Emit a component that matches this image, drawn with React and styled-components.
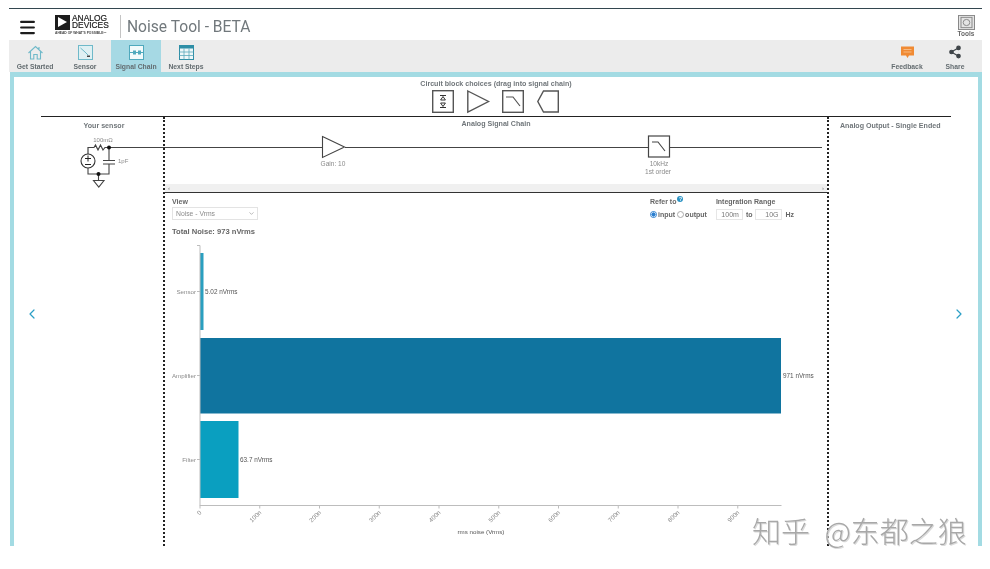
import React from "react";
import styled, { createGlobalStyle } from "styled-components";
import { Menu, ChevronLeft, ChevronRight, ChevronDown, Share2 } from "lucide-react";

const Global = createGlobalStyle`
  html, body { margin: 0; padding: 0; background: #fff; }
  body { font-family: "Liberation Sans", Arial, sans-serif; }
`;

const Page = styled.div`
  position: relative;
  width: 990px;
  height: 569px;
  box-sizing: border-box;
  padding: 8px 8px 23px 9px;
  display: flex;
  flex-direction: column;
  overflow: hidden;
  filter: blur(0.3px);
`;

const Header = styled.header`
  height: 31px;
  flex: none;
  border-top: 1px solid #33464f;
  display: flex;
  align-items: center;
  padding-left: 9px;
`;
const Burger = styled(Menu)`
  width: 19px;
  height: 19px;
  flex: none;
  color: #1d1d1d;
  stroke-width: 2.8;
  margin-top: 5px;
`;
const LogoWrap = styled.div`
  margin-left: 18px;
  width: 55px;
  display: flex;
  flex-direction: column;
  gap: 1px;
`;
const LogoRow = styled.div`
  display: flex;
  gap: 2px;
  align-items: center;
`;
const LogoMark = styled.div`
  width: 15px;
  height: 15px;
  background: #1c1c1c;
  display: flex;
  align-items: center;
  justify-content: center;
`;
const LogoWords = styled.div`
  font-size: 8.4px;
  line-height: 7.5px;
  font-weight: 400;
  color: #222;
  -webkit-text-stroke: 0.2px #222;
`;
const LogoTag = styled.div`
  font-size: 3.3px;
  line-height: 4px;
  font-weight: 700;
  color: #444;
  white-space: nowrap;
`;
const Divider = styled.div`
  width: 1px;
  height: 23px;
  background: #c4c4c4;
  margin: 4px 6px 0 10px;
`;
const Title = styled.h1`
  margin: 4px 0 0;
  font-family: Roboto, "Liberation Sans", sans-serif;
  font-size: 15.6px;
  font-weight: 400;
  letter-spacing: 0;
  color: #71787c;
`;
const ToolsBtn = styled.div`
  margin-left: auto;
  margin-right: 4px;
  margin-top: 2px;
  width: 24px;
  display: flex;
  flex-direction: column;
  align-items: center;
  font-size: 6.5px;
  font-weight: 700;
  color: #666;
`;

const TabBar = styled.nav`
  height: 32px;
  flex: none;
  background: #ececec;
  display: flex;
  padding: 0 4px 0 2px;
`;
const Tab = styled.div`
  width: ${(p) => p.$w}px;
  flex: none;
  box-sizing: border-box;
  padding-top: 4px;
  display: flex;
  flex-direction: column;
  align-items: center;
  justify-content: space-between;
  padding-bottom: 2px;
  background: ${(p) => (p.$active ? "#a6d9e4" : "transparent")};
  margin-left: ${(p) => (p.$push ? "auto" : "0")};
  font-size: 6.8px;
  font-weight: 700;
  color: #636c70;
  white-space: nowrap;
`;
const TabIcon = styled.svg`
  width: 17px;
  height: 17px;
  display: block;
`;
const ShareIcon = styled(Share2)`
  width: 14px;
  height: 14px;
  color: #3d4347;
  fill: #3d4347;
  margin-top: 1px;
`;

const Frame = styled.main`
  flex: 1;
  min-height: 0;
  margin-left: 1px;
  border: solid #a3dbe3;
  border-width: 5px 4px 0 4px;
  display: flex;
  flex-direction: column;
  position: relative;
`;
const Choices = styled.section`
  height: 39px;
  flex: none;
  box-sizing: border-box;
  padding-top: 3px;
  display: flex;
  flex-direction: column;
  align-items: center;
  gap: 2px;
`;
const SmallHead = styled.div`
  font-size: 7.1px;
  line-height: 8px;
  font-weight: 700;
  color: #70767a;
  text-align: ${(p) => p.$align || "center"};
`;
const SensorTitle = styled(SmallHead)`
  padding-left: 4px;
`;
const ChoiceRow = styled.div`
  display: flex;
  gap: 13px;
  margin-left: -1px;
`;
const ChoiceIcon = styled.svg`
  width: 22px;
  height: 23px;
  display: block;
  overflow: visible;
`;
const Columns = styled.div`
  flex: 1;
  min-height: 0;
  margin: 0 27px;
  border-top: 1px solid #222;
  display: flex;
`;
const SensorCol = styled.aside`
  width: 122px;
  flex: none;
  display: flex;
  flex-direction: column;
  padding-top: 5px;
`;
const Diagram = styled.svg`
  display: block;
  overflow: visible;
  flex: none;
`;
const ChainDiagram = styled(Diagram)`
  margin-top: 2px;
`;
const CenterCol = styled.section`
  width: 662px;
  flex: none;
  border: dotted #222;
  border-width: 0 2px;
  display: flex;
  flex-direction: column;
  min-height: 0;
`;
const OutputCol = styled.aside`
  flex: 1;
  padding: 5px 0 0 11px;
`;
const ChainPanel = styled.div`
  height: 76px;
  flex: none;
  box-sizing: border-box;
  border-bottom: 1px solid #333;
  padding-top: 3px;
  display: flex;
  flex-direction: column;
`;
const Scroll = styled.div`
  height: 8px;
  margin-top: auto;
  background: #f0f0f0;
  display: flex;
  justify-content: space-between;
  align-items: center;
  padding: 0 3px;
  font-size: 6px;
  line-height: 8px;
  color: #777;
`;
const Controls = styled.div`
  display: flex;
  padding: 5px 0 0 7px;
  height: 26px;
  flex: none;
`;
const CtrlGroup = styled.div`
  display: flex;
  flex-direction: column;
  gap: 1px;
  margin-left: ${(p) => p.$ml || 0}px;
`;
const CtrlLabel = styled.div`
  font-size: 7px;
  line-height: 8px;
  font-weight: 700;
  color: #666;
  display: flex;
  gap: 1px;
`;
const Info = styled.span`
  width: 6px;
  height: 6px;
  border-radius: 50%;
  background: #2b93c4;
  color: #fff;
  font-size: 5px;
  line-height: 6px;
  text-align: center;
  margin-top: -2px;
`;
const SelectBox = styled.div`
  width: 86px;
  height: 13px;
  box-sizing: border-box;
  border: 1px solid #e3e3e3;
  display: flex;
  align-items: center;
  justify-content: space-between;
  padding: 0 2px 0 3px;
  font-size: 6.8px;
  color: #8b8b8b;
`;
const Row = styled.div`
  display: flex;
  align-items: center;
  gap: ${(p) => p.$gap || 0}px;
  font-size: 7px;
  font-weight: 700;
  color: #666;
  height: 11px;
  margin-top: 2px;
`;
const Radio = styled.span`
  width: 7px;
  height: 7px;
  border-radius: 50%;
  box-sizing: border-box;
  border: 1px solid ${(p) => (p.$on ? "#2b7fd0" : "#aaa")};
  background: ${(p) => (p.$on ? "radial-gradient(circle, #2b7fd0 55%, #fff 60%)" : "#fff")};
  margin-right: 1px;
  margin-left: ${(p) => (p.$on ? 0 : 2)}px;
`;
const Field = styled.div`
  width: 27px;
  height: 11px;
  box-sizing: border-box;
  border: 1px solid #e6e6e6;
  font-size: 7px;
  font-weight: 400;
  line-height: 9px;
  text-align: right;
  padding-right: 3px;
  color: #777;
`;
const Total = styled.div`
  margin: 3px 0 3px 7px;
  font-size: 7.6px;
  line-height: 9px;
  font-weight: 700;
  color: #666;
  flex: none;
`;
const Chevron = styled.div`
  position: absolute;
  top: 229px;
  ${(p) => (p.$right ? "right: 11px;" : "left: 10px;")}
  color: #2b9fc6;
  display: flex;
`;
const Watermark = styled.div`
  position: absolute;
  left: 752px;
  top: 511px;
  font-family: "Noto Sans CJK SC", sans-serif;
  font-size: 29px;
  font-weight: 300;
  line-height: 38px;
  color: #a8a8a8;
  text-shadow: 1px 1px 0 #dadada;
  white-space: nowrap;
  word-spacing: 8px;
`;

const stroke = { fill: "none", stroke: "#555", strokeWidth: 1.4 };
const lbl = { fontFamily: "Liberation Sans, Arial, sans-serif", fontSize: 6.6, fill: "#8a8a8a" };

function Choice1() {
  return (
    <ChoiceIcon viewBox="0 0 22 23">
      <rect x="0.7" y="0.7" width="20.6" height="21.6" {...stroke} />
      <path d="M8 5.5h6M8.6 10h4.8L11 6.5z M8 17.5h6M8.6 13h4.8L11 16.5z" fill="none" stroke="#333" strokeWidth="1" />
    </ChoiceIcon>
  );
}
function Choice2() {
  return (
    <ChoiceIcon viewBox="0 0 22 23">
      <path d="M0.8 1 L21.5 11.5 L0.8 22z" {...stroke} />
    </ChoiceIcon>
  );
}
function Choice3() {
  return (
    <ChoiceIcon viewBox="0 0 22 23">
      <rect x="0.7" y="0.7" width="20.6" height="21.6" {...stroke} />
      <path d="M4 7h7l7 9" fill="none" stroke="#555" strokeWidth="1.2" />
    </ChoiceIcon>
  );
}
function Choice4() {
  return (
    <ChoiceIcon viewBox="0 0 22 23">
      <path d="M6.5 1H21.3V22H6.5L0.8 11.5z" {...stroke} />
    </ChoiceIcon>
  );
}

function Circuit() {
  return (
    <Diagram viewBox="41 130 122 62" width="122" height="62">
      <text x="103" y="141.5" textAnchor="middle" {...lbl} fontSize="6">100mΩ</text>
      <text x="118" y="162.5" {...lbl} fontSize="6">1pF</text>
      <path d="M88 154V147.5H94l1.5-2.5 2.5 5 2.5-5 2.5 5 2-2.5H167" fill="none" stroke="#444" strokeWidth="1.2" />
      <circle cx="88" cy="161" r="7" fill="#fff" stroke="#333" strokeWidth="1.1" />
      <path d="M85 158.5h6M88 155.5v6M85 164.5h6" stroke="#222" strokeWidth="1" />
      <path d="M109 147.5V160M103 160.5h12M103 164h12M109 164V174H88V168M98.5 174V180" fill="none" stroke="#444" strokeWidth="1.1" />
      <path d="M93.5 180.5h10.5L98.8 187z" fill="none" stroke="#444" strokeWidth="1.1" />
      <circle cx="109" cy="147.5" r="2" fill="#111" />
      <circle cx="98.5" cy="174" r="2" fill="#111" />
    </Diagram>
  );
}

function Chain() {
  return (
    <ChainDiagram viewBox="165 130 660 44" width="660" height="44">
      <path d="M165 147.5H322M345 147.5H648M669 147.5H822" stroke="#444" strokeWidth="1.2" />
      <path d="M322.5 136.5L344.5 147L322.5 157.5z" fill="#fff" stroke="#444" strokeWidth="1.1" />
      <text x="333" y="166" textAnchor="middle" {...lbl}>Gain: 10</text>
      <rect x="648.5" y="136" width="21" height="21" fill="#fff" stroke="#444" strokeWidth="1.2" />
      <path d="M652 142h6l7 9" fill="none" stroke="#444" strokeWidth="1.1" />
      <text x="659" y="165.5" textAnchor="middle" {...lbl}>10kHz</text>
      <text x="658" y="173.5" textAnchor="middle" {...lbl}>1st order</text>
    </ChainDiagram>
  );
}

const ticks = ["0", "100n", "200n", "300n", "400n", "500n", "600n", "700n", "800n", "900n"];

function BarChart() {
  return (
    <Diagram viewBox="165 239 662 307" width="662" height="307">
      <rect x="200" y="253" width="3.5" height="77" fill="#2a9fc0" />
      <rect x="200" y="338" width="581" height="75.5" fill="#10749f" />
      <rect x="200" y="421" width="38.5" height="77" fill="#0a9fc0" />
      <path d="M197 245.5H200V505.5H781.5" fill="none" stroke="#bdbdbd" strokeWidth="1" />
      {[291.5, 375.5, 459.5].map((y) => (
        <path key={y} d={`M197 ${y}H200`} stroke="#bdbdbd" />
      ))}
      <text x="196" y="293.5" textAnchor="end" {...lbl} fontSize="6.2">Sensor</text>
      <text x="196" y="377.5" textAnchor="end" {...lbl} fontSize="6.2">Amplifier</text>
      <text x="196" y="461.5" textAnchor="end" {...lbl} fontSize="6.2">Filter</text>
      <text x="205" y="293.5" {...lbl} fontSize="6.4" fill="#555">5.02 nVrms</text>
      <text x="783" y="377.5" {...lbl} fontSize="6.4" fill="#555">971 nVrms</text>
      <text x="240" y="461.5" {...lbl} fontSize="6.4" fill="#555">63.7 nVrms</text>
      {ticks.map((t, i) => {
        const x = 200 + i * 59.75;
        return (
          <g key={t}>
            <path d={`M${x} 505V508.5`} stroke="#bdbdbd" />
            <text x={x + 2} y={513} textAnchor="end" transform={`rotate(-45 ${x + 2} 513)`} {...lbl} fontSize="6.2">{t}</text>
          </g>
        );
      })}
      <text x="481" y="533.5" textAnchor="middle" {...lbl} fontSize="6.2" fill="#555">rms noise (Vrms)</text>
    </Diagram>
  );
}

export default function App() {
  return (
    <Page>
      <Global />
      <Header>
        <Burger />
        <LogoWrap>
          <LogoRow>
            <LogoMark>
              <svg width="9" height="10" viewBox="0 0 9 10"><path d="M0 0L9 5L0 10z" fill="#fff" /></svg>
            </LogoMark>
            <LogoWords>ANALOG<br />DEVICES</LogoWords>
          </LogoRow>
          <LogoTag>AHEAD OF WHAT'S POSSIBLE™</LogoTag>
        </LogoWrap>
        <Divider />
        <Title>Noise Tool - BETA</Title>
        <ToolsBtn>
          <svg width="17" height="15" viewBox="0 0 17 16" preserveAspectRatio="none">
            <rect x="0.5" y="0.5" width="16" height="15" fill="#e4e4e4" stroke="#888" />
            <rect x="3" y="2.5" width="11" height="11" fill="none" stroke="#888" />
            <circle cx="8.5" cy="8" r="3.3" fill="none" stroke="#888" />
          </svg>
          Tools
        </ToolsBtn>
      </Header>
      <TabBar>
        <Tab $w={48}>
          <TabIcon viewBox="0 0 17 17">
            <path d="M1.5 9L8.5 2.5L15.5 9M3.5 7.5V15H6.8V10.5H10.2V15H13.5V7.5M12 3V5" fill="none" stroke="#6fb9c9" strokeWidth="1.1" />
          </TabIcon>
          Get Started
        </Tab>
        <Tab $w={52}>
          <TabIcon viewBox="0 0 17 17">
            <rect x="1.5" y="1.5" width="14" height="14" fill="#dff0f3" stroke="#6fb9c9" />
            <path d="M3.5 4L8 8L11 11" fill="none" stroke="#6fb9c9" />
            <path d="M10 11.5h3v1.5h-3z" fill="#444" />
          </TabIcon>
          Sensor
        </Tab>
        <Tab $w={50} $active>
          <TabIcon viewBox="0 0 17 17">
            <rect x="1.5" y="1.5" width="14" height="14" fill="#f2fafb" stroke="#4fa9bd" />
            <path d="M1.5 8.5H15.5" stroke="#4fa9bd" />
            <rect x="5" y="6.5" width="3" height="4" fill="#4fa9bd" />
            <rect x="10" y="6.5" width="3" height="4" fill="#4fa9bd" />
          </TabIcon>
          Signal Chain
        </Tab>
        <Tab $w={50}>
          <TabIcon viewBox="0 0 17 17">
            <rect x="1.5" y="1.5" width="14" height="14" fill="#eef7f9" stroke="#2f8ea6" />
            <rect x="1.5" y="1.5" width="14" height="3" fill="#2f8ea6" />
            <path d="M1.5 8h14M1.5 11.5h14M6 4.5v11M11 4.5v11" stroke="#5aa9bc" strokeWidth="0.8" />
          </TabIcon>
          Next Steps
        </Tab>
        <Tab $w={50} $push>
          <TabIcon viewBox="0 0 17 17">
            <path d="M2 2.5H15V11.5H10L8.5 14L7 11.5H2z" fill="#f08a33" />
            <path d="M4.5 5.5h8M4.5 8h8" stroke="#f9c797" strokeWidth="0.8" />
          </TabIcon>
          Feedback
        </Tab>
        <Tab $w={46}>
          <ShareIcon />
          Share
        </Tab>
      </TabBar>
      <Frame>
        <Choices>
          <SmallHead>Circuit block choices (drag into signal chain)</SmallHead>
          <ChoiceRow>
            <Choice1 />
            <Choice2 />
            <Choice3 />
            <Choice4 />
          </ChoiceRow>
        </Choices>
        <Columns>
          <SensorCol>
            <SensorTitle>Your sensor</SensorTitle>
            <Circuit />
          </SensorCol>
          <CenterCol>
            <ChainPanel>
              <SmallHead>Analog Signal Chain</SmallHead>
              <Chain />
              <Scroll><span>‹</span><span>›</span></Scroll>
            </ChainPanel>
            <Controls>
              <CtrlGroup>
                <CtrlLabel>View</CtrlLabel>
                <SelectBox>
                  Noise - Vrms
                  <ChevronDown size={7} />
                </SelectBox>
              </CtrlGroup>
              <CtrlGroup $ml={392}>
                <CtrlLabel>Refer to<Info>?</Info></CtrlLabel>
                <Row>
                  <Radio $on />input
                  <Radio />output
                </Row>
              </CtrlGroup>
              <CtrlGroup $ml={9}>
                <CtrlLabel>Integration Range</CtrlLabel>
                <Row $gap={3}>
                  <Field>100m</Field>to<Field>10G</Field>Hz
                </Row>
              </CtrlGroup>
            </Controls>
            <Total>Total Noise: 973 nVrms</Total>
            <BarChart />
          </CenterCol>
          <OutputCol>
            <SmallHead $align="left">Analog Output - Single Ended</SmallHead>
          </OutputCol>
        </Columns>
        <Chevron><ChevronLeft size={16} strokeWidth={1.8} /></Chevron>
        <Chevron $right><ChevronRight size={16} strokeWidth={1.8} /></Chevron>
      </Frame>
      <Watermark>知乎 @东都之狼</Watermark>
    </Page>
  );
}
